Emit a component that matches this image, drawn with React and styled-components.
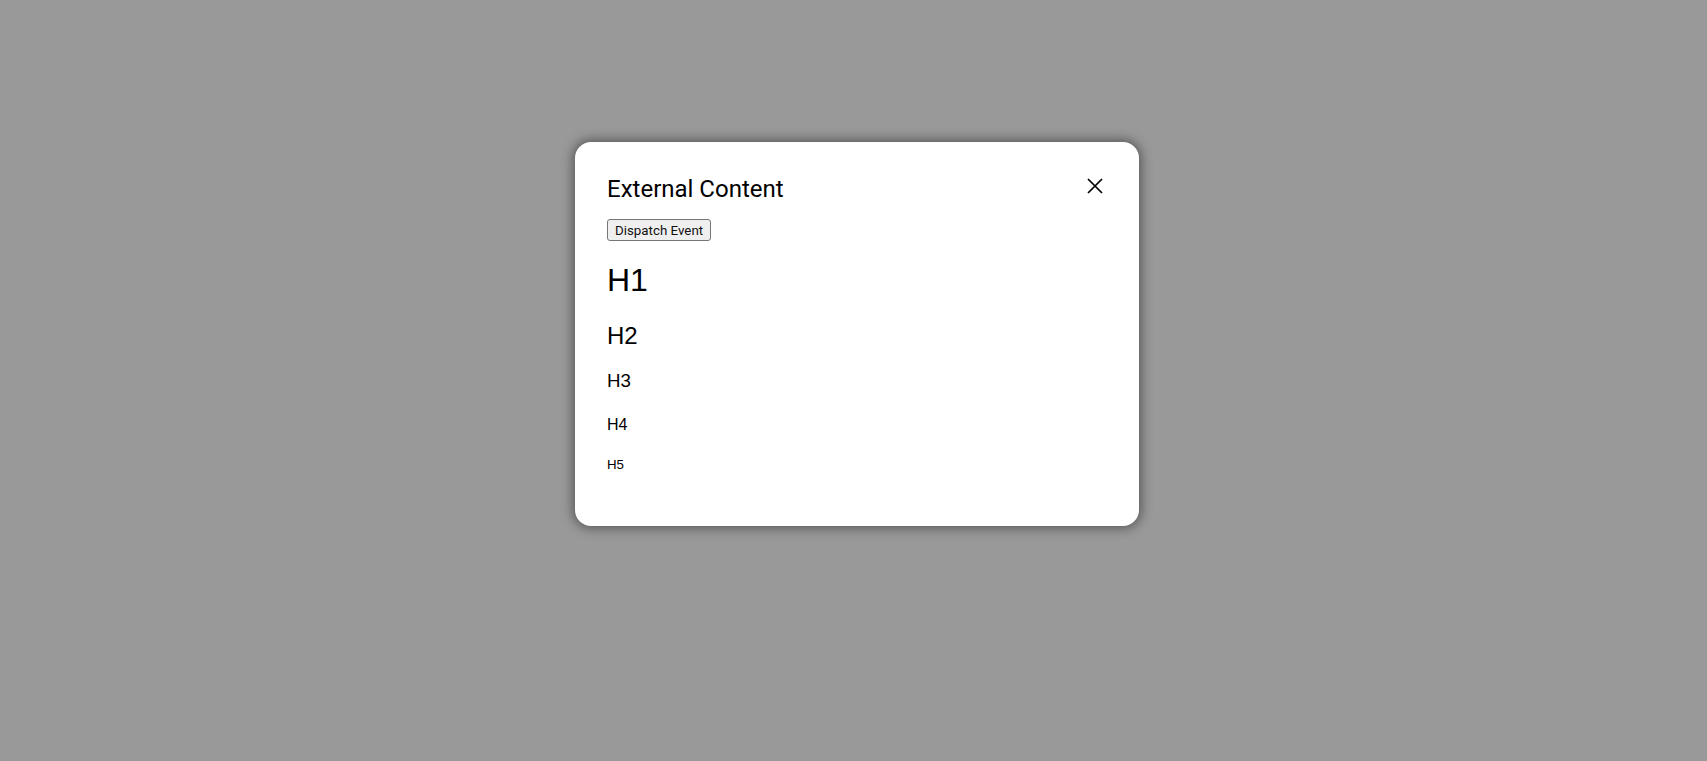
import React from 'react';
import styled, { createGlobalStyle } from 'styled-components';

const GlobalStyle = createGlobalStyle`
  html, body {
    margin: 0;
    padding: 0;
    height: 100%;
  }
  body {
    background: #999999;
    font-family: Roboto, "Noto Sans", Arial, sans-serif;
  }
  #root {
    height: 100%;
  }
`;

const Backdrop = styled.div`
  min-height: 100vh;
  display: flex;
  justify-content: center;
  align-items: flex-start;
  padding: 142px 0 0 7px;
  box-sizing: border-box;
`;

const Modal = styled.div`
  width: 564px;
  box-sizing: border-box;
  background: #ffffff;
  border-radius: 16px;
  padding: 33px 32px 31px;
  box-shadow: 0 0 12px 2px rgba(0, 0, 0, 0.45);
`;

const Header = styled.div`
  display: flex;
  justify-content: space-between;
  align-items: flex-start;
  margin-bottom: 16px;
`;

const Title = styled.h2`
  margin: 0;
  font-family: Roboto, sans-serif;
  font-size: 24px;
  font-weight: 400;
  line-height: normal;
  color: #000;
`;

const CloseButton = styled.button`
  margin-top: -1px;
  width: 24px;
  height: 24px;
  padding: 0;
  border: none;
  background: transparent;
  cursor: pointer;
  color: #000;
  display: flex;
  align-items: center;
  justify-content: center;
`;

const Content = styled.div`
  font-family: "Liberation Sans", Arial, sans-serif;
  color: #000;
`;

const DispatchButton = styled.button`
  display: block;
  height: 22px;
  padding: 0 7px;
  border: 1px solid #767676;
  border-radius: 3px;
  background: #efefef;
  font-family: Roboto, sans-serif;
  font-size: 13.333px;
  font-weight: 400;
  color: #111;
`;

const Heading = styled.div`
  font-size: ${(p) => p.size}em;
  margin: ${(p) => p.top}em 0 ${(p) => p.gap}em;
  font-weight: 400;
  line-height: 1.18;
`;

const headings = [
  { label: 'H1', size: 2, top: 0.67, gap: 0.67 },
  { label: 'H2', size: 1.5, top: 0.83, gap: 0.83 },
  { label: 'H3', size: 1.17, top: 1, gap: 1 },
  { label: 'H4', size: 1, top: 1.5, gap: 1.33 },
  { label: 'H5', size: 0.83, top: 1.67, gap: 1.67 },
];

const CloseIcon = () => (
  <svg width="24" height="24" viewBox="0 0 24 24" fill="none">
    <path d="M5 5L19 19M19 5L5 19" stroke="currentColor" strokeWidth="1.7" />
  </svg>
);

const App = () => {
  return (
    <>
      <GlobalStyle />
      <Backdrop>
        <Modal role="dialog">
          <Header>
            <Title>External Content</Title>
            <CloseButton aria-label="Close">
              <CloseIcon />
            </CloseButton>
          </Header>
          <Content>
            <DispatchButton>Dispatch Event</DispatchButton>
            {headings.map((h) => (
              <Heading
                key={h.label}
                as={h.label.toLowerCase()}
                size={h.size}
                top={h.top}
                gap={h.gap}
              >
                {h.label}
              </Heading>
            ))}
          </Content>
        </Modal>
      </Backdrop>
    </>
  );
};

export default App;
